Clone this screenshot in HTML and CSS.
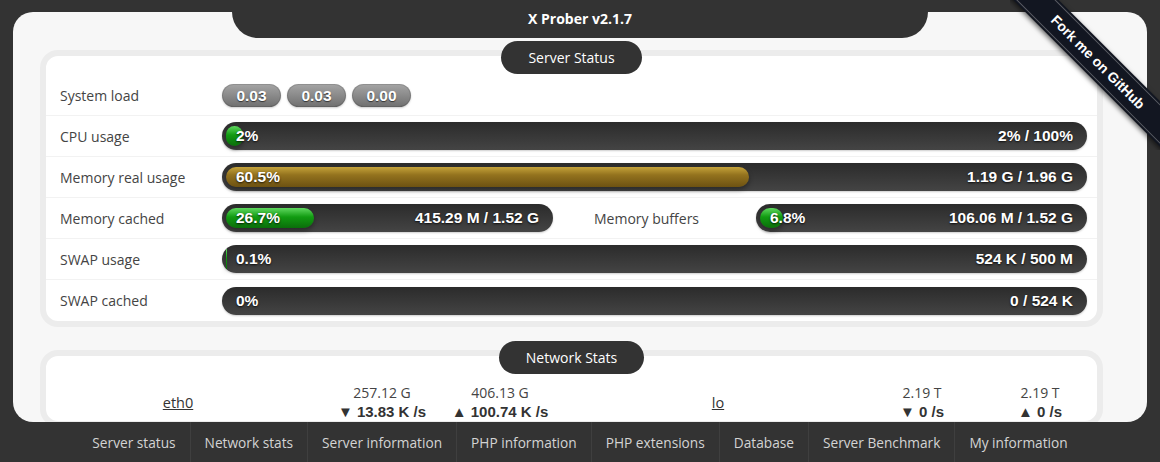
FILE: index.html
```html
<!DOCTYPE html>
<html lang="en">
<head>
  <meta charset="UTF-8">
  <meta name="viewport" content="width=device-width,initial-scale=1.0">
  <title>X Prober v2.1.7</title>
  <link rel="stylesheet" href="styles.css">
</head>
<body>
  <!-- タイトルタブ -->
  <h1 class="title">X Prober v2.1.7</h1>

  <!-- Fork me ribbon -->
  <div class="ribbon-wrap">
    <a class="ribbon" href="#">Fork me on GitHub</a>
  </div>

  <div class="main">
    <!-- Server Status -->
    <div class="card">
      <div class="card-title">Server Status</div>

      <div class="rows">
        <div class="row">
          <div class="label">System load</div>
          <div class="loads">
            <span class="load">0.03</span>
            <span class="load">0.03</span>
            <span class="load">0.00</span>
          </div>
        </div>

        <div class="row">
          <div class="label">CPU usage</div>
          <div class="bar">
            <div class="fill green" style="width:2%"></div>
            <div class="bar-text"><span>2%</span><span>2% / 100%</span></div>
          </div>
        </div>

        <div class="row">
          <div class="label">Memory real usage</div>
          <div class="bar">
            <div class="fill gold" style="width:60.5%"></div>
            <div class="bar-text"><span>60.5%</span><span>1.19 G / 1.96 G</span></div>
          </div>
        </div>

        <div class="row split">
          <div class="half">
            <div class="label">Memory cached</div>
            <div class="bar">
              <div class="fill green" style="width:26.7%"></div>
              <div class="bar-text"><span>26.7%</span><span>415.29 M / 1.52 G</span></div>
            </div>
          </div>
          <div class="half">
            <div class="label">Memory buffers</div>
            <div class="bar">
              <div class="fill green" style="width:6.8%"></div>
              <div class="bar-text"><span>6.8%</span><span>106.06 M / 1.52 G</span></div>
            </div>
          </div>
        </div>

        <div class="row">
          <div class="label">SWAP usage</div>
          <div class="bar">
            <div class="fill green" style="width:0.15%"></div>
            <div class="bar-text"><span>0.1%</span><span>524 K / 500 M</span></div>
          </div>
        </div>

        <div class="row">
          <div class="label">SWAP cached</div>
          <div class="bar">
            <div class="fill green" style="width:0%"></div>
            <div class="bar-text"><span>0%</span><span>0 / 524 K</span></div>
          </div>
        </div>
      </div>
    </div>

    <!-- Network Stats -->
    <div class="card">
      <div class="card-title">Network Stats</div>
      <div class="net-row">
        <div class="net">
          <div class="net-name"><a href="#">eth0</a></div>
          <div class="net-data">
            <div>257.12 G</div>
            <div class="speed">▼ 13.83 K /s</div>
          </div>
          <div class="net-data">
            <div>406.13 G</div>
            <div class="speed">▲ 100.74 K /s</div>
          </div>
        </div>
        <div class="net">
          <div class="net-name"><a href="#">lo</a></div>
          <div class="net-data">
            <div>2.19 T</div>
            <div class="speed">▼ 0 /s</div>
          </div>
          <div class="net-data">
            <div>2.19 T</div>
            <div class="speed">▲ 0 /s</div>
          </div>
        </div>
      </div>
    </div>
  </div>

  <!-- 下部メニュー -->
  <nav class="nav">
    <a href="#">Server status</a>
    <a href="#">Network stats</a>
    <a href="#">Server information</a>
    <a href="#">PHP information</a>
    <a href="#">PHP extensions</a>
    <a href="#">Database</a>
    <a href="#">Server Benchmark</a>
    <a href="#">My information</a>
  </nav>
</body>
</html>
```

FILE: styles.css
```css
/* リセット */
* {
  margin: 0;
  padding: 0;
  box-sizing: border-box;
}
body {
  font-family: 'Open Sans', 'Noto Sans', sans-serif;
  background-color: #333;
  color: #444;
  height: 100vh;
  display: flex;
  flex-direction: column;
  overflow: hidden;
}
a {
  color: inherit;
}

/* タイトル */
.title {
  position: relative;
  z-index: 2;
  width: 696px;
  height: 38px;
  margin: 0 auto -26px;
  background-color: #333;
  border-radius: 0 0 26px 26px;
  color: #fff;
  font-size: 14px;
  font-weight: bold;
  line-height: 37px;
  text-align: center;
}

/* Fork me ribbon */
.ribbon-wrap {
  position: absolute;
  top: 0;
  right: 0;
  width: 150px;
  height: 150px;
  overflow: hidden;
  z-index: 3;
}
.ribbon {
  position: absolute;
  left: -22px;
  top: 46px;
  width: 220px;
  height: 32px;
  background-color: #121621;
  color: #fff;
  font-family: 'Liberation Sans', Arial, sans-serif;
  font-size: 14px;
  font-weight: bold;
  line-height: 32px;
  text-align: center;
  text-decoration: none;
  transform: rotate(45deg);
  box-shadow: 0 2px 5px rgba(0, 0, 0, 0.6);
}
.ribbon::before {
  content: "";
  position: absolute;
  left: 0; right: 0;
  top: 2px; bottom: 2px;
  border-top: 1px solid rgba(255, 255, 255, 0.3);
  border-bottom: 1px solid rgba(255, 255, 255, 0.3);
}

/* メイン */
.main {
  flex: 1;
  min-height: 0;
  margin: 0 13px;
  padding: 38px 44px 0 27px;
  background-color: #f7f7f7;
  border-radius: 20px;
  overflow: hidden;
}

.card {
  background-color: #fff;
  border: 6px solid #ececec;
  border-radius: 18px;
  margin-bottom: 23px;
}
.card-title {
  width: fit-content;
  height: 33px;
  margin: -15px auto 0;
  padding: 0 27px;
  background-color: #333;
  border-radius: 17px;
  color: #fff;
  font-size: 14px;
  line-height: 33px;
}

.rows {
  padding-top: 1px;
}
.row {
  display: grid;
  grid-template-columns: 162px 1fr;
  align-items: center;
  height: 41px;
  padding: 0 10px 0 14px;
  border-bottom: 1px solid #f2f2f2;
}
.row:last-child {
  border-bottom: none;
}
.row.split {
  grid-template-columns: 1fr 1fr;
  column-gap: 41px;
}
.half {
  display: grid;
  grid-template-columns: 162px 1fr;
  align-items: center;
}
.label {
  font-size: 14px;
  color: #444;
}

/* 負荷 */
.loads {
  display: flex;
  gap: 6px;
}
.load {
  width: 59px;
  height: 23px;
  border-radius: 12px;
  background: linear-gradient(#a5a5a5, #6f6f6f);
  box-shadow: inset 0 0 0 1px rgba(0, 0, 0, 0.12), 0 1px 2px rgba(0, 0, 0, 0.2);
  color: #fff;
  font-family: 'Liberation Sans', Arial, sans-serif;
  font-size: 15.5px;
  font-weight: bold;
  line-height: 23px;
  text-align: center;
  text-shadow: 0 1px 1px rgba(0, 0, 0, 0.6);
}

/* プログレスバー */
.bar {
  display: grid;
  height: 28px;
  border-radius: 14px;
  background: linear-gradient(#2b2b2b, #444);
  box-shadow: 0 1px 2px rgba(0, 0, 0, 0.2);
}
.fill,
.bar-text {
  grid-area: 1 / 1;
}
.fill {
  height: 20px;
  margin: 4px;
  border-radius: 10px;
  justify-self: start;
  max-width: calc(100% - 8px);
  box-shadow: 0 3px 5px rgba(0, 0, 0, 0.35);
}
.fill.green {
  background: linear-gradient(#5fd85f, #119b11 45%, #0b6e0b);
}
.fill.gold {
  background: linear-gradient(#c4a23a, #93721e 40%, #6d5212);
}
.bar-text {
  display: flex;
  justify-content: space-between;
  align-items: center;
  padding: 0 14px;
  color: #fff;
  font-family: 'Liberation Sans', Arial, sans-serif;
  font-size: 15.5px;
  font-weight: bold;
  text-shadow: 0 1px 2px rgba(0, 0, 0, 0.8);
  white-space: nowrap;
}

/* ネットワーク */
.net-row {
  display: grid;
  grid-template-columns: 1fr 1fr;
  column-gap: 41px;
  padding: 9px 10px 0 14px;
}
.net {
  display: flex;
  align-items: center;
}
.net-name {
  flex: 0 0 236px;
  margin-right: 27px;
  text-align: center;
  font-size: 14.5px;
  color: #333;
}
.net-data {
  flex: 0 0 118px;
  text-align: center;
  font-size: 14px;
  line-height: 19px;
  white-space: nowrap;
}
.speed {
  font-family: 'Liberation Sans', Arial, sans-serif;
  font-size: 15px;
  font-weight: bold;
  color: #333;
}

/* 下部メニュー */
.nav {
  display: flex;
  justify-content: center;
  height: 40px;
  background-color: #333;
}
.nav a {
  padding: 0 14px;
  color: #d4d4d4;
  font-size: 13.7px;
  line-height: 42px;
  text-decoration: none;
  border-left: 1px solid #3f3f3f;
}
.nav a:first-child {
  border-left: none;
}
```
